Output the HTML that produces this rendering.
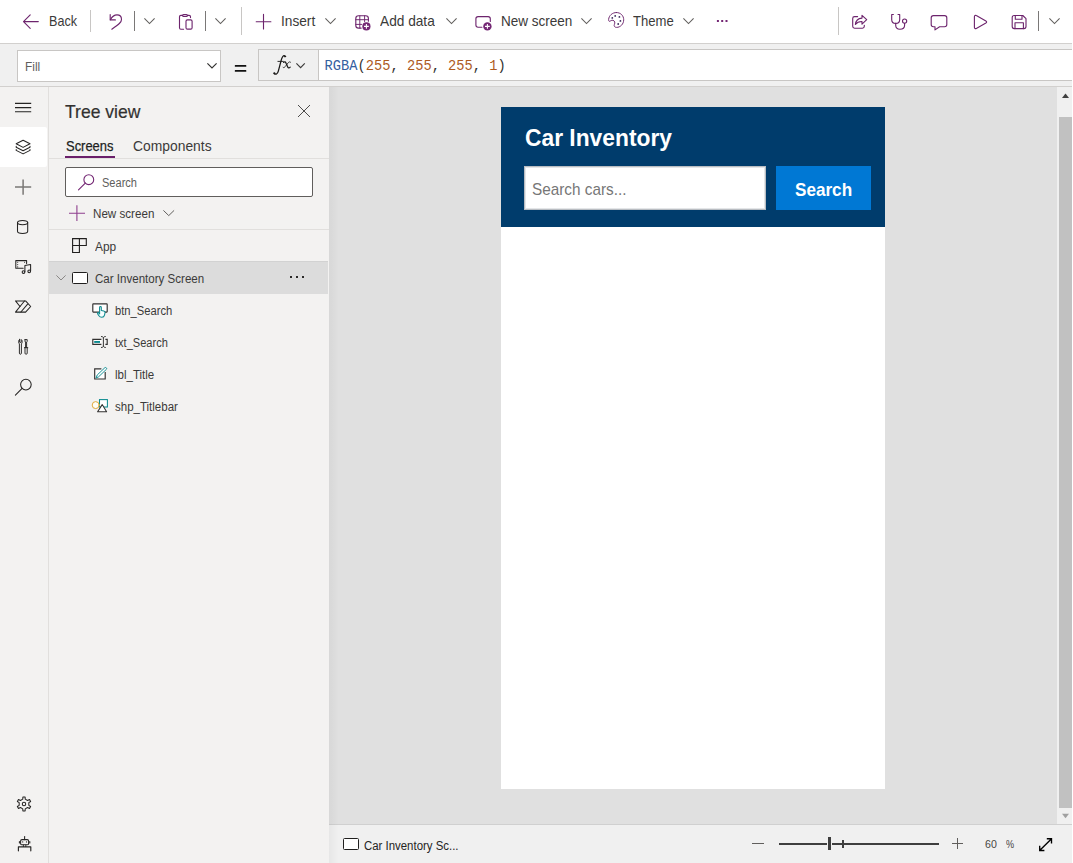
<!DOCTYPE html>
<html><head><meta charset="utf-8"><title>Power Apps</title>
<style>
*{box-sizing:border-box;margin:0;padding:0}
html,body{width:1073px;height:863px;overflow:hidden;background:#fff;font-family:"Liberation Sans",sans-serif;}
.a{position:absolute;display:block}
.t{position:absolute;white-space:pre;line-height:1;transform-origin:0 0;display:block}
svg{overflow:visible}
</style></head><body>

<div class="a" id="top" style="left:0;top:0;width:1072px;height:43px;background:#fff"></div>
<div class="a" style="left:0;top:43px;width:1072px;height:1px;background:#d2d0ce"></div>
<svg class="a" style="left:0;top:0" width="1072" height="44" viewBox="0 0 1072 44" fill="none" stroke="#6d246d" stroke-width="1.12" stroke-linecap="round" stroke-linejoin="round">
<path d="M38.3 21.6 H23.6 M30.2 14.9 L23.5 21.6 L30.2 28.3"/>
<path d="M110.2 14.6 V19.9 H115.4"/><path d="M110.4 19.7 C112.2 16.4 114.6 14.9 117 14.9 C119.8 14.9 121.5 16.9 121.5 19.4 C121.5 22.3 119 24.2 111.8 29.2"/>
<path d="M183.6 29.2 H180.9 Q179.5 29.2 179.5 27.8 V16.8 Q179.5 15.4 180.9 15.4 H182.6 M187.4 15.4 H189.1 Q190.5 15.4 190.5 16.8 V17.6"/>
<rect x="182.6" y="14.5" width="4.8" height="1.9" rx="0.95"/>
<rect x="186" y="19.9" width="6.1" height="9.2" rx="1.4"/>
<path d="M256.2 21.7 H270.9 M263.5 14.4 V29"/>
<path d="M361.2 28.1 H358.5 Q355.8 28.1 355.8 25.4 V18.5 Q355.8 15.8 358.5 15.8 H365.7 Q368.4 15.8 368.4 18.5 V21.3"/><path d="M355.8 19.7 H368.4 M355.8 24.4 H361.6 M359.8 15.8 V28.1 M364.6 15.8 V21.6" stroke-width="0.95"/>
<path d="M482 27.2 H478.1 Q475.9 27.2 475.9 25 V18.8 Q475.9 16.6 478.1 16.6 H488.1 Q490.3 16.6 490.3 18.8 V21.4"/>
<path d="M616.4 12.5 C620.8 12.5 623.7 15.8 623.7 19.8 C623.7 24.2 620.2 27.4 616.6 27.4 C614.6 27.4 613.7 26 614.4 24.4 C615.2 22.6 614.9 21 613 20.3 C611.6 19.9 610.6 21 609.6 21.3 C608.8 21.5 608.5 20.6 608.6 19.4 C609 15.6 612.2 12.5 616.4 12.5 Z" stroke-width="0.95"/>
<path d="M857.6 16.6 H854.6 Q852.7 16.6 852.7 18.5 V26.3 Q852.7 28.2 854.6 28.2 H862.4 Q864.3 28.2 864.3 26.3 V25.3"/>
<path d="M862 15.3 L866.7 19.7 L862 24.2 V21.5 C859 21.4 857 22.4 855.4 24.5 C855.7 21 858 18.4 862 18.1 Z"/>
<path d="M893.4 14.5 H891.7 V19.4 C891.7 21.9 893.3 23.4 895.7 23.4 C898.1 23.4 899.7 21.9 899.7 19.4 V14.5 H898"/><path d="M895.7 23.4 V25.3 C895.7 27.6 897.5 29.2 899.9 29.2 C902.5 29.2 904.6 27.6 904.6 25.2 V23.3"/><circle cx="904.6" cy="21.1" r="2.1"/>
<path d="M933.4 15.6 H944.6 Q946.8 15.6 946.8 17.8 V24.5 Q946.8 26.7 944.6 26.7 H939.6 L935 29.9 V26.7 H933.4 Q931.2 26.7 931.2 24.5 V17.8 Q931.2 15.6 933.4 15.6 Z"/>
<path d="M974.4 16.7 C974.4 15.5 975.3 15 976.3 15.6 L985.9 21 C986.9 21.6 986.9 22.5 985.9 23.1 L976.3 28.4 C975.3 29 974.4 28.5 974.4 27.3 Z"/>
<path d="M1014.2 15.5 H1022.8 L1026 18.7 V26.6 Q1026 28.6 1024 28.6 H1014.2 Q1012.2 28.6 1012.2 26.6 V17.5 Q1012.2 15.5 1014.2 15.5 Z"/><path d="M1015.3 15.5 V19.2 H1022 V15.5 M1015 28.6 V22.7 H1023.4 V28.6"/>
</svg>
<svg class="a" style="left:0;top:0" width="1072" height="44" viewBox="0 0 1072 44">
<circle cx="366.4" cy="26.4" r="4.7" fill="#fff"/><circle cx="366.4" cy="26.4" r="4.1" fill="#742774"/><path d="M364 26.4 H368.8 M366.4 24 V28.8" stroke="#fff" stroke-width="1.1"/>
<circle cx="487.4" cy="26.4" r="4.8" fill="#fff"/><circle cx="487.4" cy="26.4" r="4.2" fill="#742774"/><path d="M485 26.4 H489.8 M487.4 24 V28.8" stroke="#fff" stroke-width="1.1"/>
<circle cx="612.3" cy="17.9" r="0.9" fill="#3b2a5a"/>
<circle cx="615.2" cy="15.9" r="0.9" fill="#3b2a5a"/>
<circle cx="619.4" cy="16.9" r="0.9" fill="#3b2a5a"/>
<circle cx="620.4" cy="20.9" r="0.9" fill="#3b2a5a"/>
<circle cx="618.2" cy="24" r="0.9" fill="#3b2a5a"/>
<rect x="716.9" y="20" width="2" height="2" fill="#742774"/>
<rect x="721.2" y="20" width="2" height="2" fill="#742774"/>
<rect x="725.5" y="20" width="2" height="2" fill="#742774"/>
</svg>
<div class="a" style="left:90px;top:10px;width:1px;height:22px;background:#c8c6c4"></div>
<div class="a" style="left:241px;top:7px;width:1px;height:28px;background:#c8c6c4"></div>
<div class="a" style="left:838px;top:7px;width:1px;height:28px;background:#c8c6c4"></div>
<div class="a" style="left:134px;top:11px;width:1px;height:20px;background:#7a7877"></div>
<div class="a" style="left:205px;top:11px;width:1px;height:20px;background:#7a7877"></div>
<div class="a" style="left:1038px;top:11px;width:1px;height:20px;background:#7a7877"></div>
<svg class="a" style="left:144px;top:18.1px" width="11" height="6.6" viewBox="0 0 11 6.6"><path d="M0.4 0.4 L5.5 5.6 L10.6 0.4" fill="none" stroke="#605e5c" stroke-width="1.05"/></svg>
<svg class="a" style="left:215px;top:18.1px" width="11" height="6.6" viewBox="0 0 11 6.6"><path d="M0.4 0.4 L5.5 5.6 L10.6 0.4" fill="none" stroke="#605e5c" stroke-width="1.05"/></svg>
<svg class="a" style="left:324.5px;top:18.1px" width="11" height="6.6" viewBox="0 0 11 6.6"><path d="M0.4 0.4 L5.5 5.6 L10.6 0.4" fill="none" stroke="#605e5c" stroke-width="1.05"/></svg>
<svg class="a" style="left:445.5px;top:18.1px" width="11" height="6.6" viewBox="0 0 11 6.6"><path d="M0.4 0.4 L5.5 5.6 L10.6 0.4" fill="none" stroke="#605e5c" stroke-width="1.05"/></svg>
<svg class="a" style="left:580.5px;top:18.1px" width="11" height="6.6" viewBox="0 0 11 6.6"><path d="M0.4 0.4 L5.5 5.6 L10.6 0.4" fill="none" stroke="#605e5c" stroke-width="1.05"/></svg>
<svg class="a" style="left:682.5px;top:18.1px" width="11" height="6.6" viewBox="0 0 11 6.6"><path d="M0.4 0.4 L5.5 5.6 L10.6 0.4" fill="none" stroke="#605e5c" stroke-width="1.05"/></svg>
<svg class="a" style="left:1048.5px;top:18.1px" width="11" height="6.6" viewBox="0 0 11 6.6"><path d="M0.4 0.4 L5.5 5.6 L10.6 0.4" fill="none" stroke="#605e5c" stroke-width="1.05"/></svg>
<span class="t" style="left:48.7px;top:14.10px;font-size:14.2px;color:#3b3a39;transform:scaleX(0.8876);">Back</span>
<span class="t" style="left:281.3px;top:14.10px;font-size:14.2px;color:#3b3a39;transform:scaleX(0.9638);">Insert</span>
<span class="t" style="left:380.4px;top:14.10px;font-size:14.2px;color:#3b3a39;transform:scaleX(0.9646);">Add data</span>
<span class="t" style="left:500.8px;top:14.10px;font-size:14.2px;color:#3b3a39;transform:scaleX(0.9530);">New screen</span>
<span class="t" style="left:633.2px;top:14.10px;font-size:14.2px;color:#3b3a39;transform:scaleX(0.9217);">Theme</span>
<div class="a" style="left:0;top:44px;width:1072px;height:42px;background:#f0f0f0"></div>
<div class="a" style="left:0;top:86px;width:1072px;height:1px;background:#d2d0ce"></div>
<div class="a" style="left:17px;top:50px;width:204px;height:32px;background:#fff;border:1px solid #c8c6c4"></div>
<span class="t" style="left:25.4px;top:60.55px;font-size:12.5px;color:#605e5c;transform:scaleX(0.9519);">Fill</span>
<svg class="a" style="left:207px;top:63px" width="10" height="6" viewBox="0 0 10 6"><path d="M0.4 0.4 L5.0 5 L9.6 0.4" fill="none" stroke="#323130" stroke-width="1.15"/></svg>
<svg class="a" style="left:230px;top:60px" width="20" height="16" viewBox="230 60 20 16"><rect x="234.8" y="65" width="11.5" height="1.8" rx="0.5" fill="#111"/><rect x="234.8" y="69.9" width="11.5" height="1.9" rx="0.5" fill="#111"/></svg>
<div class="a" style="left:258px;top:49px;width:61px;height:32px;background:#f0f0f0;border:1px solid #c8c6c4"></div>
<div class="a" style="left:318px;top:49px;width:756px;height:32px;background:#fff;border:1px solid #c8c6c4"></div>
<svg class="a" style="left:270px;top:52px" width="24" height="26" viewBox="270 52 24 26" fill="none" stroke="#1b1a19" stroke-linecap="round" stroke-linejoin="round"><path d="M274.3 73.5 C275.6 74.9 277.5 74.3 278.4 70.8 L281 61 C281.9 57.4 282.9 55.5 284.2 55.5 C284.9 55.5 285.2 55.9 285.2 56.4" stroke-width="1.25"/><circle cx="274.3" cy="73.3" r="0.8" fill="#1b1a19" stroke-width="0.5"/><circle cx="285" cy="56.5" r="0.7" fill="#1b1a19" stroke-width="0.5"/><path d="M277.9 61.4 H283.3" stroke-width="0.9"/><path d="M283.6 62.3 C284.8 61.3 285.6 61.9 286.2 63.5 L287.5 66.5 C288.1 68 289 68.2 290.2 67.1" stroke-width="1.25"/><path d="M290.7 62.4 C290 61.4 289 61.7 288 63 L285 66.8 C284.2 67.8 283.4 68 282.9 67.2" stroke-width="0.8"/></svg>
<svg class="a" style="left:295.5px;top:63px" width="9.2" height="5.6" viewBox="0 0 9.2 5.6"><path d="M0.4 0.4 L4.6 4.6 L8.799999999999999 0.4" fill="none" stroke="#3b3a39" stroke-width="1.15"/></svg>
<span class="t" style="left:324.6px;top:60.14px;font-size:13.72px;color:#323130;font-family:'Liberation Mono',monospace;"><span style="color:#34609f">RGBA</span><span style="color:#323130">(</span><span style="color:#ad5a1e">255</span><span style="color:#323130">,</span> <span style="color:#ad5a1e">255</span><span style="color:#323130">,</span> <span style="color:#ad5a1e">255</span><span style="color:#323130">,</span> <span style="color:#ad5a1e">1</span><span style="color:#323130">)</span></span>
<div class="a" style="left:0;top:87px;width:48px;height:776px;background:#f3f2f1"></div>
<div class="a" style="left:48px;top:87px;width:1px;height:776px;background:#e1dfdd"></div>
<div class="a" style="left:0;top:127px;width:47px;height:40px;background:#fff;border-radius:0 2px 2px 0"></div>
<svg class="a" style="left:0;top:87px" width="48" height="776" viewBox="0 87 48 776" fill="none" stroke="#252423" stroke-width="1.05" stroke-linecap="round" stroke-linejoin="round">
<path d="M15 103.4 H31.2 M15 107.6 H31.2 M15 111.8 H31.2" stroke-linecap="butt" stroke-width="1.1"/>
<path d="M23.1 140.2 L30 143.8 L23.1 147.4 L16.2 143.8 Z"/><path d="M16.2 146.2 V147.2 L23.1 150.7 L30 147.2 V146.2"/><path d="M16.2 149.5 V150.4 L23.1 153.9 L30 150.4 V149.5"/>
<path d="M15 187.1 H31.2 M23.1 179.4 V194.8" stroke="#7a7876" stroke-width="1.5" stroke-linecap="butt"/>
<path d="M17.5 222.6 V231.2 C17.5 232.5 19.8 233.4 22.6 233.4 C25.4 233.4 27.7 232.5 27.7 231.2 V222.6"/><ellipse cx="22.6" cy="222.6" rx="5.1" ry="2.2"/>
<path d="M23.2 268.3 H15.8 V260.6 H26.6 V263.6"/><path d="M17.7 262.2 V262.3 M17.7 264.5 V264.6 M17.7 266.8 V266.9 M24.6 262.2 V262.3" stroke-width="1.1"/>
<path d="M24.9 271.6 V265.6 L30.6 264.5 V270.8"/><circle cx="23.5" cy="272.1" r="1.35"/><circle cx="29.2" cy="271.3" r="1.35"/>
<path d="M15.5 300.9 H25.6 L30.7 306.5 L25.6 312.1 H15.5 L20 306.5 Z"/><path d="M20 306.5 L24.5 301 M20.9 312 L27.6 304.2"/>
<path d="M19.6 339.5 V342 C19.6 342.6 21.2 342.6 21.2 342 V339.5 C22 340 22.2 340.8 22.2 341.6 C22.2 342.8 21.7 343.5 21.4 343.9 V353.2 C21.4 354.6 19.4 354.6 19.4 353.2 V343.9 C19.1 343.5 18.6 342.8 18.6 341.6 C18.6 340.8 18.8 340 19.6 339.5 Z" stroke-width="0.95"/><path d="M25 339.6 H27.2 V341.4 L26.6 342 V347.6 M25.6 342 L25 341.4 V339.6 M25.6 342 V347.6 M24.4 347.7 H27.8 M25 347.8 V353.2 C25 354.6 27.2 354.6 27.2 353.2 V347.8" stroke-width="0.95"/>
<circle cx="25.9" cy="384.6" r="5.3"/><path d="M22.1 388.4 L15.4 395.2"/>
<circle cx="24" cy="804" r="1.7"/><path d="M22.75 799.16 L22.89 796.99 L25.11 796.99 L25.25 799.16 L27.57 800.50 L29.52 799.53 L30.63 801.46 L28.82 802.66 L28.82 805.34 L30.63 806.54 L29.52 808.47 L27.57 807.50 L25.25 808.84 L25.11 811.01 L22.89 811.01 L22.75 808.84 L20.43 807.50 L18.48 808.47 L17.37 806.54 L19.18 805.34 L19.18 802.66 L17.37 801.46 L18.48 799.53 L20.43 800.50 Z"/>
<rect x="20.6" y="839.6" width="8" height="5.2" rx="1.4"/><path d="M24.6 839.6 V836.6"/><path d="M19.4 841.4 V843 M29.8 841.4 V843"/><path d="M22.7 841.8 V841.9 M26.5 841.8 V841.9" stroke-width="1.2"/><path d="M23.4 845 V846.6 M25.8 845 V846.6" stroke-width="0.9"/><path d="M18.4 850.8 V846.8 H30.8 V850.8" stroke-width="1.15"/>
</svg>
<div class="a" style="left:49px;top:87px;width:280px;height:776px;background:#f3f2f1"></div>
<span class="t" style="left:65px;top:103.30px;font-size:18.2px;color:#323130;-webkit-text-stroke:0.2px #323130;transform:scaleX(0.9645);">Tree view</span>
<svg class="a" style="left:297px;top:104px" width="14" height="14" viewBox="0 0 14 14"><path d="M1 1 L13 13 M13 1 L1 13" stroke="#3a3938" stroke-width="0.9" fill="none"/></svg>
<span class="t" style="left:65.9px;top:138.65px;font-size:14.3px;color:#201f1e;-webkit-text-stroke:0.25px #201f1e;transform:scaleX(0.9056);">Screens</span>
<span class="t" style="left:133px;top:138.65px;font-size:14.3px;color:#3b3a39;transform:scaleX(0.9696);">Components</span>
<div class="a" style="left:65px;top:156px;width:50px;height:2px;background:#6a1f6a"></div>
<div class="a" style="left:49px;top:158px;width:280px;height:1px;background:#e1dfdd"></div>
<div class="a" style="left:65px;top:167px;width:248px;height:30px;background:#fff;border:1px solid #605e5c;border-radius:2px"></div>
<svg class="a" style="left:76px;top:173px" width="20" height="18" viewBox="76 173 20 18" fill="none" stroke="#742774" stroke-width="1.1" stroke-linecap="round"><circle cx="88.8" cy="179.7" r="4.9"/><path d="M85.3 183.2 L78.5 189.8"/></svg>
<span class="t" style="left:102px;top:177.20px;font-size:12px;color:#605e5c;transform:scaleX(0.9203);">Search</span>
<svg class="a" style="left:68px;top:205px" width="18" height="18" viewBox="68 205 18 18"><path d="M69 213.2 H85 M76.9 205.2 V221" stroke="#8f3f8f" stroke-width="1.1" fill="none"/></svg>
<span class="t" style="left:92.5px;top:207.60px;font-size:12px;color:#3b3a39;transform:scaleX(0.9691);">New screen</span>
<svg class="a" style="left:162.5px;top:210.2px" width="11.5" height="6.6" viewBox="0 0 11.5 6.6"><path d="M0.4 0.4 L5.75 5.6 L11.1 0.4" fill="none" stroke="#605e5c" stroke-width="1.0"/></svg>
<div class="a" style="left:49px;top:229px;width:280px;height:1px;background:#e1dfdd"></div>
<div class="a" style="left:49px;top:261px;width:279px;height:33px;background:#dcdcdc;border-top:1px solid #d2d2d2"></div>
<svg class="a" style="left:70px;top:236px" width="20" height="20" viewBox="70 236 20 20" fill="none" stroke="#201f1e" stroke-width="1.1"><path d="M72.6 238.6 H86.3 V245.5 H79.4 V252.5 H72.6 Z M79.4 238.6 V245.5 M72.6 245.5 H79.4"/></svg>
<span class="t" style="left:95px;top:240.80px;font-size:12px;color:#3b3a39;transform:scaleX(0.9925);">App</span>
<svg class="a" style="left:56px;top:275.4px" width="10" height="6" viewBox="0 0 10 6"><path d="M0.4 0.4 L5.0 5 L9.6 0.4" fill="none" stroke="#8a8886" stroke-width="1.0"/></svg>
<div class="a" style="left:72px;top:272px;width:16px;height:12px;background:#fff;border:1.1px solid #201f1e;border-radius:1.5px"></div>
<span class="t" style="left:95px;top:273.00px;font-size:12px;color:#3b3a39;transform:scaleX(0.9630);">Car Inventory Screen</span>
<div class="a" style="left:290px;top:276px;width:2.2px;height:2.2px;background:#2a2928"></div>
<div class="a" style="left:296px;top:276px;width:2.2px;height:2.2px;background:#2a2928"></div>
<div class="a" style="left:302px;top:276px;width:2.2px;height:2.2px;background:#2a2928"></div>
<svg class="a" style="left:90px;top:300px" width="20" height="116" viewBox="90 300 20 116" fill="none" stroke="#323130" stroke-width="1.15" stroke-linejoin="round" stroke-linecap="round">
<rect x="92.8" y="303.9" width="14.4" height="8.2" rx="0.5" fill="#fff" stroke-linecap="butt"/>
<path d="M99.6 312.6 V307.4 C99.6 306.2 101.3 306.2 101.3 307.4 V310.4 L103.8 310.9 C104.8 311.1 105.2 311.7 105 312.8 L104.5 315.1 C104.2 316.5 103.2 317.3 101.8 317.3 C100.4 317.3 99.6 316.9 98.9 315.8 L97.6 313.7 C97.2 312.9 98.1 312.3 98.7 312.9 L99.6 313.9 Z" stroke="#0b8a8f" fill="#f6ffff" stroke-width="1.05"/>
<path d="M101.4 344.4 H92.8 V339.4 H101.4" fill="#fff" stroke-linecap="butt" stroke-linejoin="miter"/><path d="M105.4 339.4 H107.2 V344.4 H105.4" stroke-linecap="butt" stroke-linejoin="miter"/>
<path d="M101.4 336.5 C102.6 336.5 103.4 337 103.4 338 V346 C103.4 347 102.6 347.5 101.4 347.5 M105.4 336.5 C104.2 336.5 103.4 337 103.4 338 M103.4 346 C103.4 347 104.2 347.5 105.4 347.5" stroke-width="0.95"/>
<rect x="94.2" y="341" width="5.8" height="1.9" fill="#0b8a8f" stroke="none"/>
<path d="M101.4 368.8 H94.7 V379 H105.2 V372" fill="#fff" stroke-linecap="butt" stroke-linejoin="miter"/>
<path d="M96.2 377.6 L97.2 375 L104.9 367.7 C105.8 366.9 107.3 368.4 106.4 369.3 L98.8 376.6 Z" stroke="#0b8a8f" fill="#fff" stroke-width="0.95"/>
<rect x="99.5" y="399.6" width="7.9" height="7.4" fill="#fff" stroke="#0b8a8f" stroke-width="1.05" stroke-linejoin="miter"/>
<circle cx="95.7" cy="405.1" r="3.5" stroke="#e0a83a" fill="#fffdf5" stroke-width="1"/>
<path d="M102.2 404.6 L106.6 411.8 H97.6 Z" fill="#fff" stroke-width="1.05"/>
</svg>
<span class="t" style="left:115.4px;top:305.00px;font-size:12px;color:#3b3a39;transform:scaleX(0.9334);">btn_Search</span>
<span class="t" style="left:115.4px;top:337.00px;font-size:12px;color:#3b3a39;transform:scaleX(0.9203);">txt_Search</span>
<span class="t" style="left:115.4px;top:369.00px;font-size:12px;color:#3b3a39;transform:scaleX(0.9583);">lbl_Title</span>
<span class="t" style="left:115.4px;top:401.00px;font-size:12px;color:#3b3a39;transform:scaleX(0.9589);">shp_Titlebar</span>
<div class="a" style="left:329px;top:87px;width:743px;height:738px;background:#e0e0e0"></div>
<div class="a" style="left:501px;top:107px;width:384px;height:682px;background:#fff"></div>
<div class="a" style="left:501px;top:107px;width:384px;height:120px;background:#003c6c"></div>
<span class="t" style="left:525.4px;top:127.20px;font-size:23.2px;color:#fff;font-weight:700;transform:scaleX(0.9834);">Car Inventory</span>
<div class="a" style="left:524px;top:166px;width:242px;height:44px;background:#b9bdc2"></div>
<div class="a" style="left:525px;top:167px;width:240px;height:42px;background:#e4e6e8"></div>
<div class="a" style="left:526px;top:168px;width:238.4px;height:40.4px;background:#fff"></div>
<span class="t" style="left:532.3px;top:180.50px;font-size:16.4px;color:#767676;transform:scaleX(0.9335);">Search cars...</span>
<div class="a" style="left:776px;top:166px;width:95px;height:44px;background:#0078d4"></div>
<span class="t" style="left:795.4px;top:182.40px;font-size:17.8px;color:#fff;font-weight:700;transform:scaleX(0.9627);">Search</span>
<div class="a" style="left:1057px;top:87px;width:15px;height:738px;background:#f0f0f0"></div>
<div class="a" style="left:1059px;top:117px;width:13px;height:691px;background:#c1c1c1"></div>
<svg class="a" style="left:1057px;top:87px" width="15" height="738" viewBox="1057 87 15 738"><path d="M1062 98 L1065.5 93.6 L1069 98 Z" fill="#404040"/><path d="M1062 813.8 L1065.5 818.2 L1069 813.8 Z" fill="#a0a0a0"/></svg>
<div class="a" style="left:329px;top:824px;width:743px;height:1px;background:#d0d0d0"></div>
<div class="a" style="left:329px;top:825px;width:743px;height:38px;background:#f0f0f0"></div>
<div class="a" style="left:343px;top:838px;width:16px;height:12px;background:#fff;border:1.1px solid #201f1e;border-radius:1.5px"></div>
<span class="t" style="left:364.4px;top:840.20px;font-size:12px;color:#252423;transform:scaleX(0.9509);">Car Inventory Sc...</span>
<div class="a" style="left:752px;top:843px;width:11.5px;height:1px;background:#605e5c"></div>
<div class="a" style="left:779px;top:843px;width:160px;height:2px;background:#3e3e3e"></div>
<div class="a" style="left:827px;top:837px;width:5px;height:13px;background:#f0f0f0"></div>
<div class="a" style="left:828px;top:837px;width:3px;height:13px;background:#3e3e3e"></div>
<div class="a" style="left:842px;top:840px;width:2px;height:8px;background:#3e3e3e"></div>
<div class="a" style="left:952px;top:843px;width:11px;height:1px;background:#605e5c"></div>
<div class="a" style="left:957.3px;top:837.6px;width:1px;height:11.6px;background:#605e5c"></div>
<span class="t" style="left:985.2px;top:838.40px;font-size:11.6px;color:#484644;transform:scaleX(0.9143);">60</span>
<span class="t" style="left:1005.8px;top:838.40px;font-size:11.6px;color:#484644;transform:scaleX(0.7855);">%</span>
<svg class="a" style="left:1036px;top:835px" width="20" height="20" viewBox="1036 835 20 20" fill="none" stroke="#000" stroke-width="1.35"><path d="M1039.9 850.3 L1051.3 838.9 M1046.8 838.7 H1051.5 V843.4 M1039.7 845.8 V850.5 H1044.4"/></svg>
<div class="a" style="left:329px;top:87px;width:10px;height:776px;background:linear-gradient(90deg,rgba(0,0,0,0.04),rgba(0,0,0,0))"></div>
<div class="a" style="left:1072px;top:0;width:1px;height:863px;background:#fff"></div>
</body></html>
